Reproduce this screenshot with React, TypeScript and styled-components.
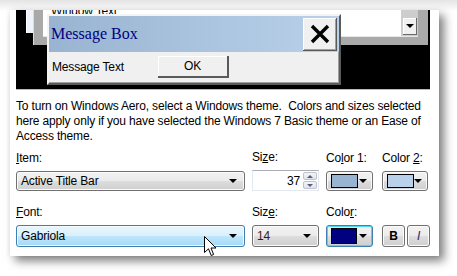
import React from 'react';
import styled, { createGlobalStyle, css } from 'styled-components';

const GlobalStyle = createGlobalStyle`
  html, body {
    margin: 0;
    padding: 0;
  }
  body {
    width: 457px;
    height: 276px;
    overflow: hidden;
    background: linear-gradient(#e4e4e4 0, #f5f5f5 7px, #ffffff 11px);
    font-family: "Liberation Sans", Arial, sans-serif;
  }
`;

// Win7 basic button faces
const greyFace = css`
  background: linear-gradient(#f2f2f2 0%, #ebebeb 50%, #dddddd 51%, #cfcfcf 100%);
  border: 1px solid #707070;
  box-shadow: inset 0 0 0 1px #fbfbfb;
`;

const blueFace = css`
  background: linear-gradient(#eaf6fd 0%, #d9f0fc 50%, #bee6fd 51%, #a7d9f5 100%);
  border: 1px solid #3c7fb1;
  box-shadow: inset 0 0 0 1px #f4fbff;
`;

const Page = styled.div`
  padding: 10px 0 0 10px;
`;

const Panel = styled.div`
  position: relative;
  width: 429px;
  height: 246px;
  box-sizing: border-box;
  padding: 0 9px 0 6px;
  background: #fff;
  box-shadow: 5px 5px 9px rgba(0, 0, 0, 0.5), -1px 0 4px rgba(0, 0, 0, 0.06);
  font-size: 12px;
  letter-spacing: -0.16px;
  color: #000;
`;

/* ---------- preview canvas ---------- */

const Preview = styled.div`
  position: relative;
  height: 79px;
  background: #000;
  overflow: hidden;
  border-bottom: 1px solid #b8b8b8;
`;

const InactiveWindow = styled.div`
  position: absolute;
  left: 10px;
  top: -20px;
  width: 30px;
  height: 43px;
  background: #eef2f9;
  border-left: 1px solid #fff;
`;

const ActiveWindow = styled.div`
  position: absolute;
  left: 17px;
  top: -30px;
  width: 395px;
  height: 65px;
  box-sizing: border-box;
  display: flex;
  padding: 0 10px 8px 9px;
  background: #a9a9a9;
  border-left: 1px solid #dcdcdc;
`;

const WindowBody = styled.div`
  flex: 1;
  display: flex;
  background: #fff;
  border-bottom: 1px solid #e6e6e6;
`;

const WindowText = styled.div`
  flex: 1;
  padding: 24px 0 0 8px;
  line-height: 15px;
`;

const ScrollBar = styled.div`
  width: 17px;
  display: flex;
  flex-direction: column;
  justify-content: flex-end;
  padding: 0 1px 1px 2px;
  box-sizing: border-box;
  background: #cdcdcd;
`;

const ScrollButton = styled.div`
  height: 16px;
  display: flex;
  align-items: center;
  justify-content: center;
  background: #f0f0f0;
  border-right: 1px solid #696969;
  border-bottom: 1px solid #696969;
  box-shadow: inset 1px 1px 0 #fff;
`;

const MessageBox = styled.div`
  position: absolute;
  left: 31px;
  top: 4px;
  width: 294px;
  height: 71px;
  box-sizing: border-box;
  display: flex;
  flex-direction: column;
  background: #f0f0f0;
  border: 2px solid;
  border-color: #f4f4f4 #5a5a5a #5a5a5a #f4f4f4;
  box-shadow: inset -1px -1px 0 #a0a0a0;
`;

const TitleBar = styled.div`
  height: 36px;
  display: flex;
  align-items: center;
  justify-content: space-between;
  padding: 0 2px 0 2px;
  background: linear-gradient(90deg, #99b4d1, #b9d1ea);
`;

const Title = styled.span`
  font-family: "Liberation Serif", "DejaVu Serif", serif;
  font-size: 16px;
  letter-spacing: 0;
  color: #000080;
`;

const CloseButton = styled.div`
  width: 34px;
  height: 33px;
  box-sizing: border-box;
  display: flex;
  align-items: center;
  justify-content: center;
  background: #f0f0f0;
  border-right: 1px solid #5a5a5a;
  border-bottom: 1px solid #5a5a5a;
  box-shadow: inset 1px 1px 0 #fff, inset -1px -1px 0 #a0a0a0;
`;

const MessageRow = styled.div`
  flex: 1;
  display: flex;
  align-items: center;
  padding: 0 0 2px 3px;
`;

const MessageText = styled.span`
  width: 106px;
`;

const OkButton = styled.div`
  width: 71px;
  height: 22px;
  box-sizing: border-box;
  display: flex;
  align-items: center;
  justify-content: center;
  background: #f0f0f0;
  border-right: 2px solid #5a5a5a;
  border-bottom: 2px solid #5a5a5a;
  box-shadow: inset 1px 1px 0 #fff;
`;

/* ---------- settings ---------- */

const Intro = styled.p`
  margin: 9px 0 6px 0;
  line-height: 15px;
  white-space: nowrap;
`;

const Row = styled.div<{ $gap?: number }>`
  display: flex;
  align-items: flex-end;
  margin-bottom: ${p => p.$gap ?? 0}px;
`;

const Field = styled.div<{ $width: number; $left?: number }>`
  width: ${p => p.$width}px;
  margin-left: ${p => p.$left ?? 0}px;
  display: flex;
  flex-direction: column;
  gap: 5px;
`;

const Label = styled.label`
  line-height: 15px;
  white-space: nowrap;
`;

const Combo = styled.div<{ $hot?: boolean; $tall?: boolean }>`
  height: ${p => (p.$tall ? 22 : 20)}px;
  box-sizing: border-box;
  display: flex;
  align-items: center;
  justify-content: space-between;
  padding: 0 7px 0 4px;
  border-radius: 3px;
  ${p => (p.$hot ? blueFace : greyFace)}
`;

const ComboText = styled.span<{ $tint?: string }>`
  color: ${p => p.$tint ?? '#000'};
`;

const Arrow = styled.span`
  width: 0;
  height: 0;
  border-left: 4px solid transparent;
  border-right: 4px solid transparent;
  border-top: 4px solid #000;
`;

const SpinBox = styled.div`
  height: 21px;
  box-sizing: border-box;
  display: flex;
  align-items: center;
  padding: 1px 1px 1px 0;
  background: #fff;
  border: 1px solid #e3e9ef;
  border-top-color: #abadb3;
`;

const SpinValue = styled.span`
  flex: 1;
  text-align: right;
  padding-right: 3px;
`;

const SpinButtons = styled.div`
  width: 14px;
  height: 100%;
  display: flex;
  flex-direction: column;
  gap: 1px;
`;

const SpinButton = styled.div`
  flex: 1;
  display: flex;
  align-items: center;
  justify-content: center;
  background: linear-gradient(#f5f5f5, #e0e3e8);
  border: 1px solid #bcc3cc;
  border-radius: 2px;
`;

const SpinTri = styled.span<{ $up?: boolean }>`
  width: 0;
  height: 0;
  border-left: 3px solid transparent;
  border-right: 3px solid transparent;
  ${p =>
    p.$up
      ? 'border-bottom: 3px solid #4d6185;'
      : 'border-top: 3px solid #4d6185;'}
`;

const ColorButton = styled.div<{ $focus?: boolean; $tall?: boolean }>`
  height: ${p => (p.$tall ? 22 : 20)}px;
  box-sizing: border-box;
  display: flex;
  align-items: center;
  justify-content: space-between;
  padding: 0 5px 0 4px;
  border-radius: 3px;
  ${greyFace}
  ${p =>
    p.$focus &&
    css`
      border-color: #3c7fb1;
      box-shadow: inset 0 0 0 1px #48d8fb;
    `}
`;

const Swatch = styled.span<{ $color: string; $wide?: boolean }>`
  width: ${p => (p.$wide ? 24 : 25)}px;
  height: ${p => (p.$wide ? 14 : 12)}px;
  background: ${p => p.$color};
  border: 1px solid #000;
`;

const StyleButtons = styled.div`
  display: flex;
  gap: 2px;
`;

const StyleButton = styled.div<{ $italic?: boolean }>`
  width: 23px;
  height: 22px;
  box-sizing: border-box;
  display: flex;
  align-items: center;
  justify-content: center;
  border-radius: 3px;
  ${greyFace}
  font-weight: ${p => (p.$italic ? 'normal' : 'bold')};
  font-style: ${p => (p.$italic ? 'italic' : 'normal')};
  color: ${p => (p.$italic ? '#1c2a6a' : '#000')};
`;

const Cursor = styled.svg`
  position: absolute;
  left: 194px;
  top: 226px;
`;

export default function App() {
  return (
    <>
      <GlobalStyle />
      <Page>
        <Panel>
          <Preview>
            <InactiveWindow />
            <ActiveWindow>
              <WindowBody>
                <WindowText>Window Text</WindowText>
                <ScrollBar>
                  <ScrollButton>
                    <Arrow />
                  </ScrollButton>
                </ScrollBar>
              </WindowBody>
            </ActiveWindow>
            <MessageBox>
              <TitleBar>
                <Title>Message Box</Title>
                <CloseButton>
                  <svg width="20" height="20" viewBox="0 0 20 20">
                    <path d="M2 2 L18 18 M18 2 L2 18" stroke="#000" strokeWidth="3.4" />
                  </svg>
                </CloseButton>
              </TitleBar>
              <MessageRow>
                <MessageText>Message Text</MessageText>
                <OkButton>OK</OkButton>
              </MessageRow>
            </MessageBox>
          </Preview>

          <Intro>
            To turn on Windows Aero, select a Windows theme.&nbsp; Colors and sizes selected
            <br />
            here apply only if you have selected the Windows 7 Basic theme or an Ease of
            <br />
            Access theme.
          </Intro>

          <Row $gap={14}>
            <Field $width={229}>
              <Label><u>I</u>tem:</Label>
              <Combo>
                <ComboText>Active Title Bar</ComboText>
                <Arrow />
              </Combo>
            </Field>
            <Field $width={67} $left={7}>
              <Label>Si<u>z</u>e:</Label>
              <SpinBox>
                <SpinValue>37</SpinValue>
                <SpinButtons>
                  <SpinButton><SpinTri $up /></SpinButton>
                  <SpinButton><SpinTri /></SpinButton>
                </SpinButtons>
              </SpinBox>
            </Field>
            <Field $width={47} $left={7}>
              <Label>Co<u>l</u>or 1:</Label>
              <ColorButton>
                <Swatch $color="#99b4d1" />
                <Arrow />
              </ColorButton>
            </Field>
            <Field $width={46} $left={9}>
              <Label>Color <u>2</u>:</Label>
              <ColorButton>
                <Swatch $color="#b9d1ea" />
                <Arrow />
              </ColorButton>
            </Field>
          </Row>

          <Row>
            <Field $width={229}>
              <Label><u>F</u>ont:</Label>
              <Combo $hot $tall>
                <ComboText>Gabriola</ComboText>
                <Arrow />
              </Combo>
            </Field>
            <Field $width={67} $left={7}>
              <Label>Siz<u>e</u>:</Label>
              <Combo $tall>
                <ComboText $tint="#3d1a1a">14</ComboText>
                <Arrow />
              </Combo>
            </Field>
            <Field $width={47} $left={7}>
              <Label>Colo<u>r</u>:</Label>
              <ColorButton $focus $tall>
                <Swatch $color="#000080" $wide />
                <Arrow />
              </ColorButton>
            </Field>
            <Field $width={48} $left={9}>
              <StyleButtons>
                <StyleButton>B</StyleButton>
                <StyleButton $italic>I</StyleButton>
              </StyleButtons>
            </Field>
          </Row>

          <Cursor width="13" height="21" viewBox="0 0 13 21">
            <path
              d="M0.5 0.5 L0.5 16.5 L4.5 12.8 L7.2 19.5 L9.6 18.5 L7 12 L12 12 Z"
              fill="#fff"
              stroke="#000"
              strokeWidth="1"
              strokeLinejoin="miter"
            />
          </Cursor>
        </Panel>
      </Page>
    </>
  );
}
